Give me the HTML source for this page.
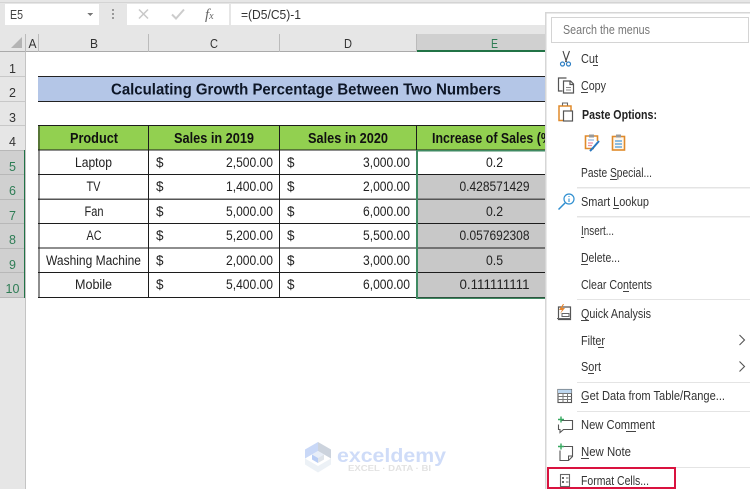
<!DOCTYPE html>
<html><head><meta charset="utf-8"><style>
html,body{margin:0;padding:0;background:#fff;width:750px;height:489px;overflow:hidden}
svg{display:block}
text{font-family:"Liberation Sans",sans-serif;fill:#1f1f1f}
.h{font-weight:bold;font-size:14.5px;fill:#111}
.b{font-size:13.5px;fill:#222}
.m{font-size:12.5px;fill:#333}
.r{font-size:12.5px;fill:#444}
.g{fill:#2e7d55}
</style></head><body>
<svg width="750" height="489" viewBox="0 0 750 489" xmlns="http://www.w3.org/2000/svg" shape-rendering="crispEdges">
<rect width="750" height="489" fill="#fff"/>
<!-- top -->
<rect width="750" height="52" fill="#e6e6e6"/>
<rect x="0" y="2" width="750" height="1" fill="#d4d4d4"/>
<rect x="5" y="4" width="94" height="21" fill="#fff"/>
<text x="10" y="19" class="r" textLength="13" lengthAdjust="spacingAndGlyphs">E5</text>
<path d="M87 13h6l-3 3z" fill="#777"/>
<rect x="112" y="9" width="2" height="2" fill="#999"/><rect x="112" y="13" width="2" height="2" fill="#999"/><rect x="112" y="17" width="2" height="2" fill="#999"/>
<rect x="127" y="4" width="102" height="21" fill="#fff"/>
<rect x="231" y="4" width="519" height="21" fill="#fff"/>
<g shape-rendering="geometricPrecision">
<path d="M139 9.500l9 9M148 9.500l-9 9" stroke="#c8c8c8" stroke-width="1.500" fill="none"/>
<path d="M172 14.500l4 4 8-9" stroke="#cccccc" stroke-width="2" fill="none"/>
</g>
<text x="205" y="19" style="font-family:'Liberation Serif',serif;font-style:italic;font-size:15px;fill:#666">f<tspan font-size="10">x</tspan></text>
<text x="241" y="19" class="r" textLength="60" lengthAdjust="spacingAndGlyphs" style="fill:#333">=(D5/C5)-1</text>
<!-- col headers -->
<rect x="0" y="34" width="750" height="18" fill="#e6e6e6"/>
<path d="M11 48L22 48L22 37Z" fill="#b4b4b4" shape-rendering="geometricPrecision"/>
<rect x="416" y="34" width="130" height="17" fill="#d0d0d0"/>
<rect x="0" y="51" width="416" height="1" fill="#aaa"/>
<rect x="416" y="50" width="130" height="2" fill="#217346"/>
<rect x="25" y="34" width="1" height="18" fill="#bbb"/><rect x="38" y="34" width="1" height="18" fill="#bbb"/><rect x="148" y="34" width="1" height="18" fill="#bbb"/><rect x="279" y="34" width="1" height="18" fill="#bbb"/><rect x="416" y="34" width="1" height="18" fill="#bbb"/>
<text x="28.500" y="48" class="r" style="fill:#333" textLength="8" lengthAdjust="spacingAndGlyphs">A</text>
<text x="90" y="48" class="r" style="fill:#333" textLength="8" lengthAdjust="spacingAndGlyphs">B</text>
<text x="210" y="48" class="r" style="fill:#333" textLength="8" lengthAdjust="spacingAndGlyphs">C</text>
<text x="344" y="48" class="r" style="fill:#333" textLength="8" lengthAdjust="spacingAndGlyphs">D</text>
<text x="491" y="48" class="r g" textLength="7" lengthAdjust="spacingAndGlyphs">E</text>
<!-- row headers -->
<rect x="0" y="52" width="25" height="437" fill="#e6e6e6"/>
<rect x="0" y="150" width="25" height="148" fill="#d0d0d0"/>
<rect x="24" y="150" width="1.500" height="148" fill="#217346"/>
<rect x="25" y="52" width="1" height="437" fill="#c4c4c4"/>
<g fill="#c8c8c8"><rect y="76" width="25" height="1"/><rect y="101" width="25" height="1"/><rect y="125" width="25" height="1"/></g>
<g fill="#b8b8b8"><rect y="150" width="24" height="1"/><rect y="174" width="24" height="1"/><rect y="199" width="24" height="1"/><rect y="223" width="24" height="1"/><rect y="248" width="24" height="1"/><rect y="272" width="24" height="1"/><rect y="297" width="24" height="1"/></g>
<g text-anchor="middle">
<text x="12.500" y="73" class="r" style="fill:#333">1</text>
<text x="12.500" y="97" class="r" style="fill:#333">2</text>
<text x="12.500" y="122" class="r" style="fill:#333">3</text>
<text x="12.500" y="146" class="r" style="fill:#333">4</text>
<text x="12.500" y="171" class="r g">5</text>
<text x="12.500" y="195" class="r g">6</text>
<text x="12.500" y="220" class="r g">7</text>
<text x="12.500" y="244" class="r g">8</text>
<text x="12.500" y="269" class="r g">9</text>
<text x="12.500" y="293" class="r g">10</text>
</g>
<!-- title -->
<rect x="38" y="77" width="512" height="24" fill="#b4c6e7"/>
<rect x="38" y="76" width="512" height="1" fill="#222"/>
<rect x="38" y="101" width="512" height="1" fill="#222"/>
<text x="111" y="94.500" style="font-weight:bold;font-size:16px;fill:#0d1626" textLength="390" lengthAdjust="spacingAndGlyphs">Calculating Growth Percentage Between Two Numbers</text>
<!-- table -->
<rect x="38" y="125" width="512" height="25" fill="#92d050"/>
<rect x="417" y="175" width="133" height="122" fill="#c8c8c8"/>
<g fill="#1c1c1c">
<rect x="38" y="125" width="512" height="1"/>
<rect x="38" y="149.500" width="512" height="1"/>
<rect x="38" y="174" width="512" height="1"/>
<rect x="38" y="198.500" width="512" height="1.500" fill="#555"/>
<rect x="38" y="223" width="512" height="1"/>
<rect x="38" y="247.500" width="512" height="1"/>
<rect x="38" y="272" width="512" height="1"/>
<rect x="38" y="297" width="512" height="1"/>
<rect x="38.500" y="125" width="1" height="173"/>
<rect x="148" y="125" width="1" height="173"/>
<rect x="279" y="125" width="1" height="173"/>
<rect x="416" y="125" width="1" height="25"/>
</g>
<rect x="416" y="150" width="2" height="148.500" fill="#3f8a62"/>
<rect x="416" y="297.500" width="134" height="1.500" fill="#3f8a62"/>
<rect x="418" y="150" width="132" height="1.500" fill="#3f8a62"/>
<text x="70" y="143" class="h" textLength="48" lengthAdjust="spacingAndGlyphs">Product</text>
<text x="174" y="143" class="h" textLength="80" lengthAdjust="spacingAndGlyphs">Sales in 2019</text>
<text x="308" y="143" class="h" textLength="80" lengthAdjust="spacingAndGlyphs">Sales in 2020</text>
<text x="432" y="143" class="h" textLength="124" lengthAdjust="spacingAndGlyphs">Increase of Sales (%)</text>

<text x="75" y="167" class="b" textLength="37" lengthAdjust="spacingAndGlyphs">Laptop</text>
<text x="86.500" y="191" class="b" textLength="14" lengthAdjust="spacingAndGlyphs">TV</text>
<text x="84.500" y="216" class="b" textLength="19" lengthAdjust="spacingAndGlyphs">Fan</text>
<text x="86.500" y="240" class="b" textLength="15" lengthAdjust="spacingAndGlyphs">AC</text>
<text x="46" y="265" class="b" textLength="95" lengthAdjust="spacingAndGlyphs">Washing Machine</text>
<text x="75" y="289" class="b" textLength="37" lengthAdjust="spacingAndGlyphs">Mobile</text>

<g>
<text x="156" y="167" class="b">$</text><text x="156" y="191" class="b">$</text><text x="156" y="216" class="b">$</text><text x="156" y="240" class="b">$</text><text x="156" y="265" class="b">$</text><text x="156" y="289" class="b">$</text>
<text x="287" y="167" class="b">$</text><text x="287" y="191" class="b">$</text><text x="287" y="216" class="b">$</text><text x="287" y="240" class="b">$</text><text x="287" y="265" class="b">$</text><text x="287" y="289" class="b">$</text>
</g>
<g>
<text x="226" y="167" class="b" textLength="47" lengthAdjust="spacingAndGlyphs">2,500.00</text>
<text x="226" y="191" class="b" textLength="47" lengthAdjust="spacingAndGlyphs">1,400.00</text>
<text x="226" y="216" class="b" textLength="47" lengthAdjust="spacingAndGlyphs">5,000.00</text>
<text x="226" y="240" class="b" textLength="47" lengthAdjust="spacingAndGlyphs">5,200.00</text>
<text x="226" y="265" class="b" textLength="47" lengthAdjust="spacingAndGlyphs">2,000.00</text>
<text x="226" y="289" class="b" textLength="47" lengthAdjust="spacingAndGlyphs">5,400.00</text>
<text x="363" y="167" class="b" textLength="47" lengthAdjust="spacingAndGlyphs">3,000.00</text>
<text x="363" y="191" class="b" textLength="47" lengthAdjust="spacingAndGlyphs">2,000.00</text>
<text x="363" y="216" class="b" textLength="47" lengthAdjust="spacingAndGlyphs">6,000.00</text>
<text x="363" y="240" class="b" textLength="47" lengthAdjust="spacingAndGlyphs">5,500.00</text>
<text x="363" y="265" class="b" textLength="47" lengthAdjust="spacingAndGlyphs">3,000.00</text>
<text x="363" y="289" class="b" textLength="47" lengthAdjust="spacingAndGlyphs">6,000.00</text>
<text x="486" y="167" class="b" textLength="17" lengthAdjust="spacingAndGlyphs">0.2</text>
<text x="459.500" y="191" class="b" textLength="70" lengthAdjust="spacingAndGlyphs">0.428571429</text>
<text x="486" y="216" class="b" textLength="17" lengthAdjust="spacingAndGlyphs">0.2</text>
<text x="459.500" y="240" class="b" textLength="70" lengthAdjust="spacingAndGlyphs">0.057692308</text>
<text x="486" y="265" class="b" textLength="17" lengthAdjust="spacingAndGlyphs">0.5</text>
<text x="459.500" y="289" class="b" textLength="70" lengthAdjust="spacingAndGlyphs">0.111111111</text>
</g>
<!-- watermark -->
<g shape-rendering="geometricPrecision">
<path d="M318 442l13 7.500v9l-13-7.500z" fill="#ccd3dd"/>
<path d="M318 442l-13 7.500v9l13-7.500z" fill="#c9d8f7"/>
<path d="M305 458.500l13 7.500 13-7.500v6l-13 8-13-8z" fill="#ecf1f6"/>
<path d="M318 451l-6 3.500 6 3.500 6-3.500z" fill="#e8eef8"/>
<path d="M312 454.500v5l6 3.500v-5z" fill="#b9cdf5"/>
<path d="M324 454.500v5l-6 3.500v-5z" fill="#dfe4ea"/>
</g>
<text x="337" y="462" style="font-weight:bold;font-size:19px;fill:#cfdcf8" textLength="109" lengthAdjust="spacingAndGlyphs">exceldemy</text>
<text x="348" y="471" style="font-weight:bold;font-size:8px;fill:#e2e2e2" textLength="83" lengthAdjust="spacingAndGlyphs">EXCEL · DATA · BI</text>
<!-- menu -->
<rect x="545" y="12" width="205" height="477" fill="#d6d6d6"/>
<rect x="546.500" y="13.500" width="204" height="476" fill="#fff"/>
<rect x="551.500" y="17.500" width="197" height="25" fill="#fff" stroke="#d4d4d4"/>
<text x="563" y="34" class="m" style="fill:#777" textLength="87" lengthAdjust="spacingAndGlyphs">Search the menus</text>
<g fill="#e4e4e4"><rect x="577" y="187" width="173" height="1.500"/><rect x="577" y="216" width="173" height="1.500"/><rect x="577" y="299" width="173" height="1"/><rect x="577" y="382" width="173" height="1"/><rect x="577" y="411" width="173" height="1"/><rect x="548" y="467" width="202" height="1"/></g>
<text x="581" y="63" class="m" textLength="17" lengthAdjust="spacingAndGlyphs">Cut</text>
<text x="581" y="90" class="m" textLength="25" lengthAdjust="spacingAndGlyphs">Copy</text>
<text x="582" y="119" class="m" style="font-weight:bold;fill:#222" textLength="75" lengthAdjust="spacingAndGlyphs">Paste Options:</text>
<text x="581" y="177" class="m" textLength="71" lengthAdjust="spacingAndGlyphs">Paste Special...</text>
<text x="581" y="206" class="m" textLength="68" lengthAdjust="spacingAndGlyphs">Smart Lookup</text>
<text x="581" y="235" class="m" textLength="33" lengthAdjust="spacingAndGlyphs">Insert...</text>
<text x="581" y="262" class="m" textLength="39" lengthAdjust="spacingAndGlyphs">Delete...</text>
<text x="581" y="289" class="m" textLength="71" lengthAdjust="spacingAndGlyphs">Clear Contents</text>
<text x="581" y="318" class="m" textLength="70" lengthAdjust="spacingAndGlyphs">Quick Analysis</text>
<text x="581" y="345" class="m" textLength="24" lengthAdjust="spacingAndGlyphs">Filter</text>
<text x="581" y="371" class="m" textLength="20" lengthAdjust="spacingAndGlyphs">Sort</text>
<text x="581" y="400" class="m" textLength="144" lengthAdjust="spacingAndGlyphs">Get Data from Table/Range...</text>
<text x="581" y="429" class="m" textLength="74" lengthAdjust="spacingAndGlyphs">New Comment</text>
<text x="581" y="456" class="m" textLength="50" lengthAdjust="spacingAndGlyphs">New Note</text>
<text x="581" y="485" class="m" textLength="68" lengthAdjust="spacingAndGlyphs">Format Cells...</text>
<!-- accelerator underlines -->
<g fill="#444"><rect x="593" y="65" width="5" height="1"/><rect x="581" y="92" width="7" height="1"/><rect x="610" y="179" width="7" height="1"/><rect x="613" y="208" width="6" height="1"/><rect x="581" y="237" width="3" height="1"/><rect x="581" y="264" width="7" height="1"/><rect x="623" y="291" width="6" height="1"/><rect x="581" y="320" width="8" height="1"/><rect x="598" y="347" width="6" height="1"/><rect x="588" y="373" width="6" height="1"/><rect x="581" y="402" width="7" height="1"/><rect x="626" y="431" width="10" height="1"/><rect x="581" y="458" width="8" height="1"/><rect x="581" y="487" width="6" height="1"/></g>
<!-- arrows -->
<g shape-rendering="geometricPrecision" fill="none">
<path d="M739.500 335l5 5-5 5M739.500 361.500l5 5-5 5" stroke="#555" stroke-width="1.100"/>
<!-- cut -->
<path d="M563 51l3.500 11M569.500 51l-4 11" stroke="#444" stroke-width="1.100"/>
<circle cx="562.500" cy="64" r="2" stroke="#2f7fc4" stroke-width="1.200"/><circle cx="568.500" cy="64" r="2" stroke="#2f7fc4" stroke-width="1.200"/>
<!-- copy -->
<path d="M562.500 91h-4v-13h8" stroke="#555" stroke-width="1.200"/>
<path d="M563.500 81h7l3 3v9h-10zM570 81v3.500h3.500" stroke="#555" stroke-width="1.200" fill="#fff"/>
<path d="M566 87.500h5M566 90h5" stroke="#888"/>
<!-- paste icon -->
<path d="M563 120.500h-4v-14.500h12v5" stroke="#e08a2a" stroke-width="1.500"/>
<path d="M562.500 105.500v-2.500h5v2.500" stroke="#666" stroke-width="1.100"/>
<rect x="563.500" y="111" width="9" height="10" stroke="#555" stroke-width="1.200" fill="#fff"/>
<!-- paste options -->
<path d="M594 148.500h-8.500v-12.500h12v5" stroke="#e08a2a" stroke-width="1.600"/>
<rect x="589" y="134.500" width="5" height="3" fill="#999"/>
<path d="M588 143h5M588 145.500h4" stroke="#ee8fa0" stroke-width="1.200"/><path d="M588 140h6" stroke="#8cb8e4" stroke-width="1.200"/>
<path d="M599 141l-6 7-3 3" stroke="#2a78c0" stroke-width="2"/>
<rect x="612.500" y="136.500" width="12" height="13.500" stroke="#e08a2a" stroke-width="1.600" fill="#fdf6ec"/>
<rect x="616" y="134.500" width="5" height="3" fill="#999"/>
<path d="M615 141h7M615 144h7M615 147h7" stroke="#4a9ad8" stroke-width="1.200"/>
<!-- smart lookup -->
<circle cx="569" cy="199" r="5" stroke="#2f8fd0" stroke-width="1.200"/>
<path d="M565 203l-6.500 6.500" stroke="#2f8fd0" stroke-width="1.500"/>
<path d="M569 196v1M569 198.500v3.500" stroke="#2f8fd0" stroke-width="1.100"/>
<!-- quick analysis -->
<path d="M558.500 310v-3h12v12.500h-12z" stroke="#555" stroke-width="1.200" fill="#fff"/>
<path d="M557 318.500h14M562 313.500h7v3h-7z" stroke="#666"/>
<path d="M563 304l-4 6h3l-2 4 5-6h-3l2-4z" fill="#e8842a"/>
<!-- get data -->
<rect x="558" y="389.500" width="13.500" height="13" stroke="#555" stroke-width="1.100"/>
<rect x="558" y="389.500" width="13.500" height="3.500" fill="#bcd6ef"/>
<path d="M558 393.500h13.500M558 396.500h13.500M558 399.500h13.500M563 393v9.500M567.500 393v9.500" stroke="#777"/>
<!-- new comment -->
<path d="M561 420.500h11.500v9h-9l-3.500 3v-3h-1.500v-5" stroke="#555" stroke-width="1.100"/>
<path d="M561 416.500v6M558 419.500h6" stroke="#37a860" stroke-width="1.400"/>
<!-- new note -->
<path d="M561.500 446.500h11v10l-4 4h-8.500v-10" stroke="#555" stroke-width="1.100"/>
<path d="M568.500 460v-4h4" stroke="#555"/>
<path d="M561 443.500v6M558 446.500h6" stroke="#37a860" stroke-width="1.400"/>
<!-- format cells -->
<rect x="560.500" y="474.500" width="9" height="12" stroke="#666" stroke-width="1.100"/>
</g>
<g fill="#666"><rect x="562" y="477" width="2" height="2"/><rect x="562" y="481" width="2" height="2"/><rect x="566" y="477.500" width="2.500" height="1"/><rect x="566" y="481.500" width="2.500" height="1"/></g>
<!-- red box -->
<rect x="548" y="468" width="127" height="20" fill="none" stroke="#d9123f" stroke-width="2"/>
</svg>
</body></html>
